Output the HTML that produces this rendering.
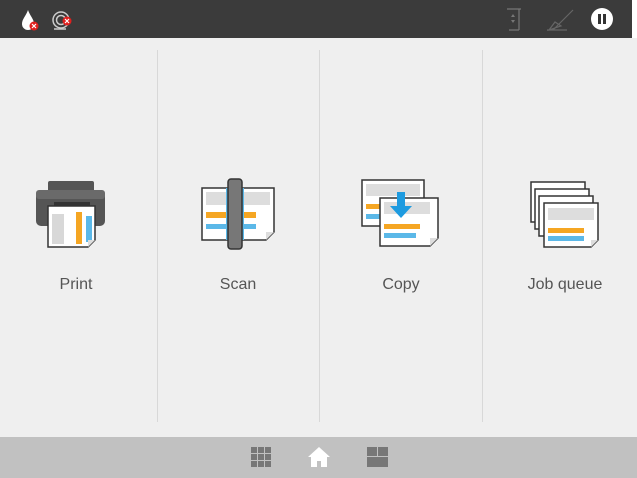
<!DOCTYPE html>
<html><head><style>
body{margin:0;width:637px;height:478px;overflow:hidden;background:#efefef;font-family:"Liberation Sans",sans-serif;position:relative}
.top{position:absolute;left:0;top:0;width:632px;height:38px;background:#3b3b3b}
.topw{position:absolute;left:632px;top:0;width:5px;height:38px;background:#fff}
.div{position:absolute;top:50px;width:1px;height:372px;background:#d8d8d8}
.lbl{position:absolute;top:276px;font-size:16px;color:#555;text-align:center;width:160px}
.bot{position:absolute;left:0;top:437px;width:637px;height:41px;background:#c1c1c1}
svg{position:absolute}
</style></head><body>
<div class="top"></div><div class="topw"></div>
<svg style="left:18px;top:7px" width="60" height="26" viewBox="0 0 60 26">
<path d="M10 3 C8 9 4 12 4 17 a6 6 0 0 0 12 0 C16 12 12 9 10 3Z" fill="#fff"/>
<circle cx="16" cy="19" r="4.5" fill="#e0201e"/><path d="M14 17l4 4M18 17l-4 4" stroke="#fff" stroke-width="1.2"/>
<circle cx="43" cy="13" r="8" fill="none" stroke="#ccc" stroke-width="1.5"/><circle cx="43" cy="13" r="4.5" fill="none" stroke="#ccc" stroke-width="1.5"/>
<path d="M36 22h12" stroke="#ccc" stroke-width="1.5"/>
<circle cx="49" cy="14" r="4.5" fill="#e0201e"/><path d="M47 12l4 4M51 12l-4 4" stroke="#fff" stroke-width="1.2"/>
</svg>
<svg style="left:505px;top:6px" width="115" height="28" viewBox="0 0 115 28">
<path d="M2 3h14M14 3v21M4 24h10" stroke="#777" stroke-width="1.2" fill="none"/>
<path d="M6 11l2-3 2 3zM6 14l2 3 2-3z" fill="#777"/>
<path d="M42 24h20M48 24l20-20M44 24l6-8 6 4z" stroke="#666" stroke-width="1.2" fill="none"/>
<circle cx="97" cy="13" r="11" fill="#fff"/><rect x="93" y="8" width="3" height="10" fill="#333"/><rect x="98" y="8" width="3" height="10" fill="#333"/>
</svg>
<div class="div" style="left:157px"></div><div class="div" style="left:319px"></div><div class="div" style="left:482px"></div>
<!-- print -->
<svg style="left:36px;top:180px" width="70" height="70" viewBox="0 0 70 70">
<rect x="12" y="1" width="46" height="12" rx="2" fill="#555"/>
<rect x="0" y="10" width="69" height="36" rx="5" fill="#555"/><rect x="0" y="10" width="69" height="9" rx="3" fill="#6a6a6a"/>
<rect x="18" y="22" width="36" height="4" fill="#333"/>
<path d="M12 26h47v34l-7 7H12z" fill="#fff" stroke="#333" stroke-width="1.5"/>
<rect x="16" y="34" width="12" height="30" fill="#d8d8d8"/><rect x="40" y="32" width="6" height="32" fill="#f5a623"/><rect x="50" y="36" width="6" height="26" fill="#5bb8e8"/>
<path d="M52 67l7-7h-7z" fill="#ddd"/>
</svg>
<div class="lbl" style="left:-4px">Print</div>
<!-- scan -->
<svg style="left:200px;top:178px" width="78" height="72" viewBox="0 0 78 72">
<path d="M2 10h72v44l-8 8H2z" fill="#fff" stroke="#333" stroke-width="1.5"/>
<rect x="6" y="14" width="64" height="13" fill="#ddd"/><rect x="6" y="34" width="50" height="6" fill="#f5a623"/><rect x="6" y="46" width="50" height="5" fill="#5bb8e8"/>
<rect x="26" y="10" width="18" height="52" fill="#5bb8e8"/>
<rect x="28" y="1" width="14" height="70" rx="3" fill="#777" stroke="#333" stroke-width="1.5"/>
<path d="M66 62l8-8h-8z" fill="#ddd"/>
</svg>
<div class="lbl" style="left:158px">Scan</div>
<!-- copy -->
<svg style="left:360px;top:178px" width="82" height="72" viewBox="0 0 82 72">
<path d="M2 2h62v46H2z" fill="#fff" stroke="#333" stroke-width="1.5"/>
<rect x="6" y="6" width="54" height="12" fill="#ddd"/><rect x="6" y="26" width="30" height="5" fill="#f5a623"/><rect x="6" y="36" width="30" height="5" fill="#5bb8e8"/>
<path d="M20 20h58v40l-8 8H20z" fill="#fff" stroke="#333" stroke-width="1.5"/>
<rect x="24" y="24" width="46" height="12" fill="#ddd"/><rect x="24" y="46" width="36" height="5" fill="#f5a623"/><rect x="24" y="55" width="32" height="5" fill="#5bb8e8"/>
<path d="M37 14h8v14h7l-11 12-11-12h7z" fill="#1d9be0"/>
<path d="M70 68l8-8h-8z" fill="#ddd"/>
</svg>
<div class="lbl" style="left:321px">Copy</div>
<!-- job queue -->
<svg style="left:528px;top:180px" width="72" height="70" viewBox="0 0 72 70">
<path d="M3 2h54v40H3z" fill="#fff" stroke="#333" stroke-width="1.5"/>
<path d="M7 9h54v40H7z" fill="#fff" stroke="#333" stroke-width="1.5"/>
<path d="M11 16h54v40H11z" fill="#fff" stroke="#333" stroke-width="1.5"/>
<path d="M16 23h54v37l-7 7H16z" fill="#fff" stroke="#333" stroke-width="1.5"/>
<rect x="20" y="28" width="46" height="12" fill="#ddd"/><rect x="20" y="48" width="36" height="5" fill="#f5a623"/><rect x="20" y="56" width="36" height="5" fill="#5bb8e8"/>
<path d="M63 67l7-7h-7z" fill="#ddd"/>
</svg>
<div class="lbl" style="left:485px">Job queue</div>
<div class="bot"></div>
<svg style="left:0;top:430px" width="637" height="48" viewBox="0 0 637 48">
<path d="M314 7l5-6 5 6z" fill="#efefef"/>
<g fill="#777"><rect x="251" y="17" width="6" height="6"/><rect x="258" y="17" width="6" height="6"/><rect x="265" y="17" width="6" height="6"/>
<rect x="251" y="24" width="6" height="6"/><rect x="258" y="24" width="6" height="6"/><rect x="265" y="24" width="6" height="6"/>
<rect x="251" y="31" width="6" height="6"/><rect x="258" y="31" width="6" height="6"/><rect x="265" y="31" width="6" height="6"/>
<rect x="367" y="17" width="10" height="9"/><rect x="378" y="17" width="10" height="9"/><rect x="367" y="27" width="21" height="10"/></g>
<path d="M319 17l-11 10h3v10h6v-6h4v6h6V27h3z" fill="#fff"/>
</svg>
</body></html>
